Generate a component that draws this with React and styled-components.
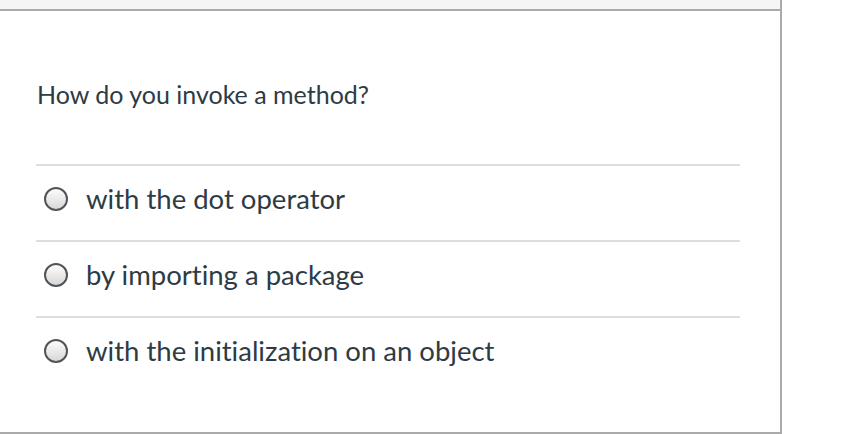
import React from "react";
import styled, { createGlobalStyle } from "styled-components";

const Global = createGlobalStyle`
  html, body { margin: 0; padding: 0; background: #fff; }
  body {
    font-family: Lato, "Noto Sans", sans-serif;
    color: #2d3b45;
    font-variant-ligatures: none;
  }
`;

const Panel = styled.div`
  width: 780px;
  height: 432px;
  box-sizing: content-box;
  border-right: 2px solid #aaaaaa;
  border-bottom: 2px solid #aaaaaa;
  display: flex;
  flex-direction: column;
`;

const Header = styled.div`
  height: 9px;
  background: #f5f5f5;
  border-bottom: 2px solid #aaaaaa;
  flex: none;
`;

const Body = styled.div`
  padding: 65px 40px 0 36px;
`;

const Question = styled.div`
  font-size: 25px;
  line-height: 36px;
  padding-left: 1px;
  margin-bottom: 52px;
`;

const Answers = styled.div`
  display: flex;
  flex-direction: column;
`;

const Answer = styled.label`
  display: flex;
  align-items: center;
  gap: 18px;
  border-top: 2px solid #dddddd;
  padding: 15px 0 23px 8px;
  font-size: 27.5px;
  line-height: 36px;
`;

const Radio = styled.span`
  width: 20px;
  height: 20px;
  border-radius: 50%;
  border: 2px solid #50555a;
  background: linear-gradient(#fcfcfc, #d8d8d8);
  flex: none;
`;

const answers = [
  "with the dot operator",
  "by importing a package",
  "with the initialization on an object",
];

export default function App() {
  return (
    <>
      <Global />
      <Panel>
        <Header />
        <Body>
          <Question>How do you invoke a method?</Question>
          <Answers>
            {answers.map((a) => (
              <Answer key={a}>
                <Radio />
                {a}
              </Answer>
            ))}
          </Answers>
        </Body>
      </Panel>
    </>
  );
}
